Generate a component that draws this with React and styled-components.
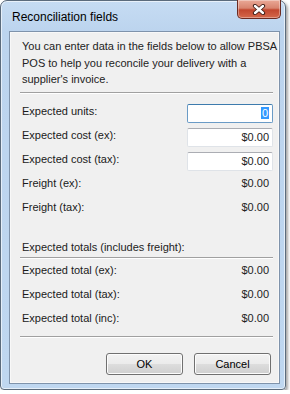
import React from "react";
import styled, { createGlobalStyle } from "styled-components";

const GlobalStyle = createGlobalStyle`
  html, body {
    margin: 0;
    padding: 0;
    background: #ffffff;
  }
  body {
    font-family: "Liberation Sans", Arial, sans-serif;
    font-size: 11px;
    color: #222;
  }
`;

const fields = [
  { label: "Expected units:", value: "0", input: true, focused: true },
  { label: "Expected cost (ex):", value: "$0.00", input: true },
  { label: "Expected cost (tax):", value: "$0.00", input: true },
  { label: "Freight (ex):", value: "$0.00" },
  { label: "Freight (tax):", value: "$0.00" },
];

const totals = [
  { label: "Expected total (ex):", value: "$0.00" },
  { label: "Expected total (tax):", value: "$0.00" },
  { label: "Expected total (inc):", value: "$0.00" },
];

export default function App() {
  return (
    <>
      <GlobalStyle />
      <Window>
        <TitleBar>
          <Title>Reconciliation fields</Title>
          <CloseButton>
            <svg width="14" height="11" viewBox="0 0 14 11">
              <path d="M3 2 L11 9 M11 2 L3 9" stroke="#3b1a14" strokeWidth="4.2" strokeLinecap="round" />
              <path d="M3 2 L11 9 M11 2 L3 9" stroke="#ffffff" strokeWidth="2.4" strokeLinecap="round" />
            </svg>
          </CloseButton>
        </TitleBar>
        <Client>
          <Intro>
            You can enter data in the fields below to allow PBSA POS to help you reconcile your delivery with a
            supplier's invoice.
          </Intro>
          <Separator $top={4} />
          <Rows $top={9}>
            {fields.map((f) => (
              <Row key={f.label}>
                <Label>{f.label}</Label>
                {f.input ? (
                  <TextBox $focused={f.focused}>
                    {f.focused ? <Selected>{f.value}</Selected> : f.value}
                  </TextBox>
                ) : (
                  <Value>{f.value}</Value>
                )}
              </Row>
            ))}
          </Rows>
          <GroupHeader>Expected totals (includes freight):</GroupHeader>
          <Separator $top={2} />
          <Rows $top={3}>
            {totals.map((t) => (
              <Row key={t.label}>
                <Label>{t.label}</Label>
                <Value>{t.value}</Value>
              </Row>
            ))}
          </Rows>
          <Separator $top={2} />
          <ButtonRow>
            <Button>OK</Button>
            <Button>Cancel</Button>
          </ButtonRow>
        </Client>
      </Window>
    </>
  );
}

const Window = styled.div`
  width: 286px;
  height: 390px;
  box-sizing: border-box;
  border: 1px solid #5b6b7c;
  border-radius: 7px 7px 4px 4px;
  background: linear-gradient(180deg, #c6dcf3 0px, #bcd4ee 30px, #bfd7f0 100%);
  box-shadow: 2px 2px 3px rgba(0, 0, 0, 0.35), inset 0 0 0 1px rgba(255, 255, 255, 0.6);
  display: flex;
  flex-direction: column;
  padding: 0 5px 6px 8px;
`;

const TitleBar = styled.div`
  height: 30px;
  flex-shrink: 0;
  display: flex;
  align-items: flex-start;
  justify-content: space-between;
`;

const Title = styled.div`
  font-size: 12px;
  color: #000;
  margin: 9px 0 0 3px;
`;

const CloseButton = styled.div`
  width: 44px;
  height: 19px;
  margin-top: -1px;
  margin-right: -1px;
  box-sizing: border-box;
  border: 1px solid #6b2b22;
  border-top: none;
  border-radius: 0 0 5px 5px;
  background: linear-gradient(180deg, #eaa997 0%, #d8846f 45%, #c2472f 55%, #d4684b 100%);
  box-shadow: inset 0 0 0 1px rgba(255, 255, 255, 0.35);
  display: flex;
  align-items: center;
  justify-content: center;
`;

const Client = styled.div`
  flex: 1;
  border: 1px solid #7f93ab;
  box-shadow: inset 0 0 0 1px #ffffff80;
  background: #f0f0f0;
  display: flex;
  flex-direction: column;
  padding: 0 6px 8px 10px;
`;

const Intro = styled.div`
  margin-top: 6px;
  padding-left: 2px;
  line-height: 16.5px;
  width: 255px;
`;

const Separator = styled.div`
  margin-top: ${(p) => p.$top}px;
  border-top: 1px solid #a0a0a0;
  border-bottom: 1px solid #ffffff;
`;

const Rows = styled.div`
  display: flex;
  flex-direction: column;
  margin-top: ${(p) => p.$top}px;
  padding-left: 2px;
`;

const Row = styled.div`
  height: 24px;
  display: flex;
  justify-content: space-between;
  align-items: flex-start;
  line-height: 16px;
`;

const Label = styled.div`
  color: #1a1a1a;
`;

const Value = styled.div`
  padding-right: 4px;
`;

const TextBox = styled.div`
  width: 86px;
  height: 19px;
  margin-top: 1px;
  box-sizing: border-box;
  background: #ffffff;
  border: 1px solid ${(p) => (p.$focused ? "#6a9bc6" : "#dfe3e8")};
  border-top-color: ${(p) => (p.$focused ? "#3d7bad" : "#abadb3")};
  border-radius: 2px;
  text-align: right;
  padding: 1px 3px 0 0;
  line-height: 15px;
`;

const Selected = styled.span`
  background: #3399ff;
  color: #ffffff;
  padding: 0 1px;
`;

const GroupHeader = styled.div`
  margin-top: 16px;
  padding-left: 2px;
  line-height: 16px;
`;

const ButtonRow = styled.div`
  display: flex;
  justify-content: flex-end;
  gap: 11px;
  margin-top: 15px;
  padding-right: 2px;
`;

const Button = styled.div`
  width: 77px;
  height: 22px;
  box-sizing: border-box;
  border: 1px solid #707070;
  border-radius: 3px;
  background: linear-gradient(180deg, #f2f2f2 0%, #ebebeb 50%, #dddddd 51%, #cfcfcf 100%);
  box-shadow: inset 0 0 0 1px #fcfcfc;
  display: flex;
  align-items: center;
  justify-content: center;
  font-size: 11px;
  color: #000;
`;
